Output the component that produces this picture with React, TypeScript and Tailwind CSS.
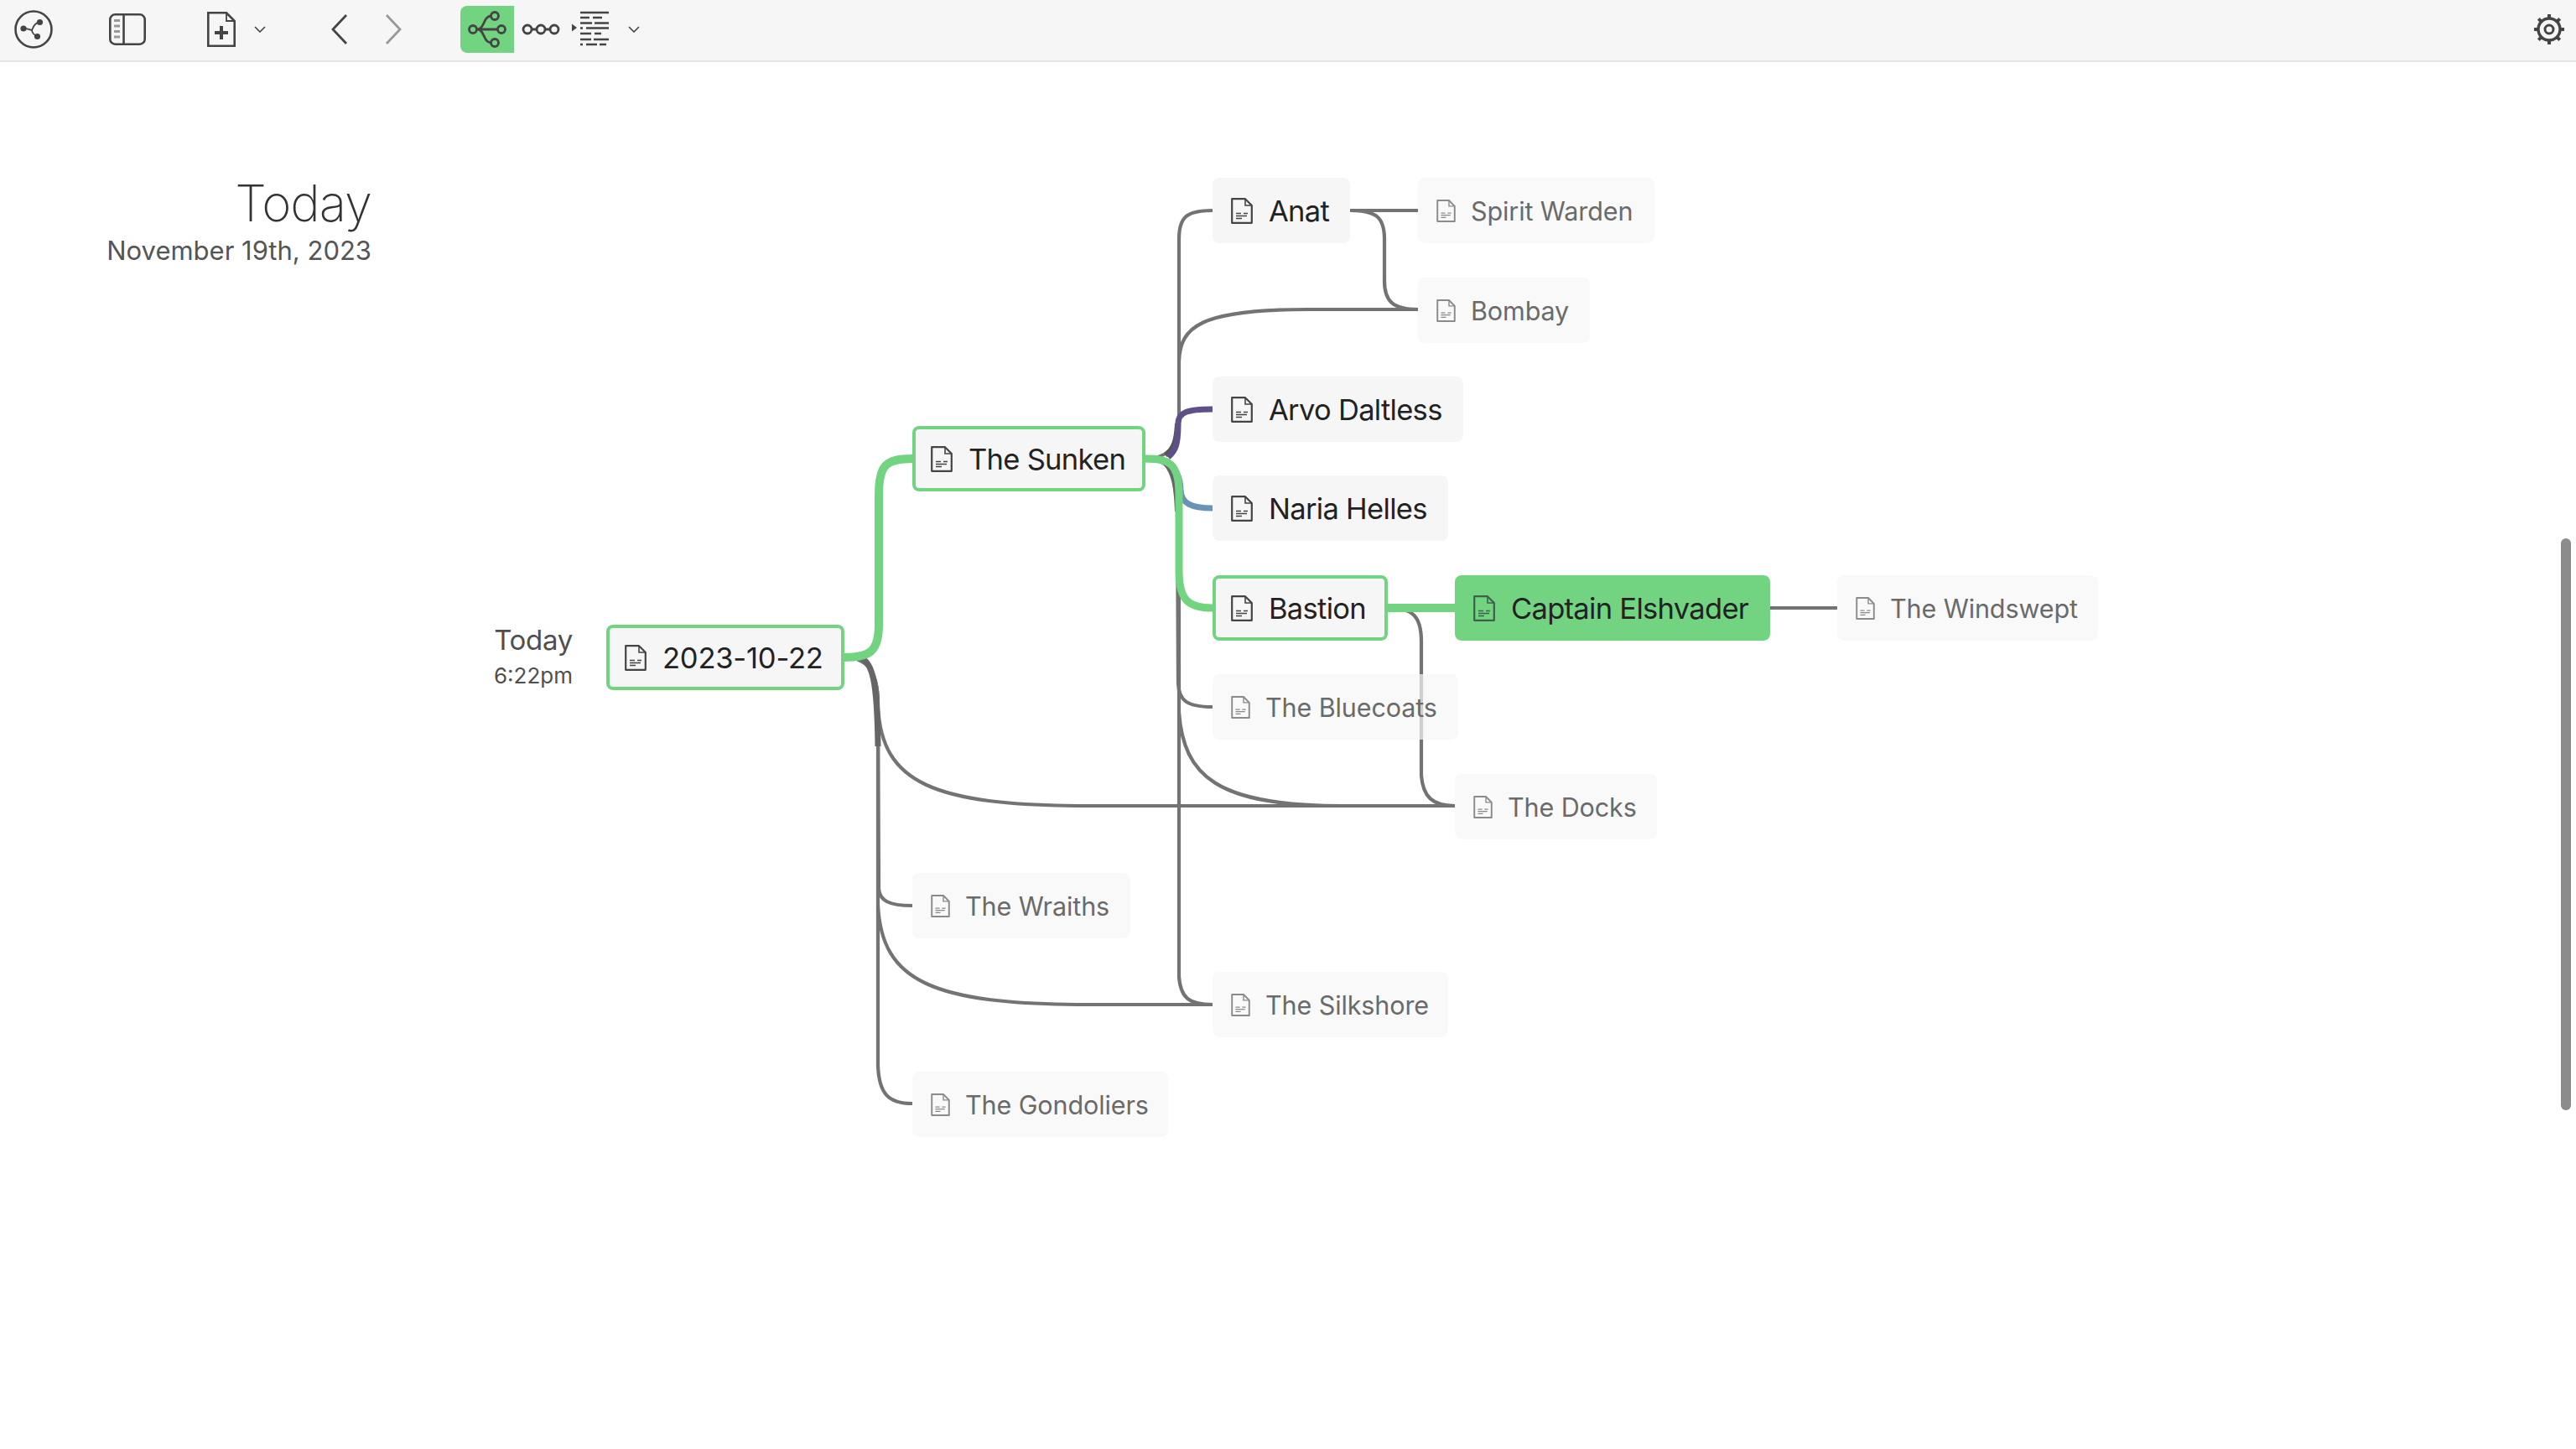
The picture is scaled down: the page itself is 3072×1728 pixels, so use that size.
const font = "font-['Inter','Liberation_Sans',sans-serif]";

function DocIcon({ dim, green }: { dim?: boolean; green?: boolean }) {
  const stroke = dim ? "#8a8a8a" : green ? "#3f5f48" : "#444444";
  return (
    <svg viewBox="0 0 26 31" className={dim ? "w-[23px] h-[27px] shrink-0" : "w-[26px] h-[31px] shrink-0"} fill="none" stroke={stroke}>
      <path d="M1.2 1.2H17L24.8 9V29.8H1.2Z" strokeWidth="2.2" strokeLinejoin="round" />
      <path d="M17 1.2V9H24.8" strokeWidth="1.6" />
      <path d="M6 18.5H12M15 18.5H20M6 21.5H19M6 24.5H13" strokeWidth="1.4" />
    </svg>
  );
}

type NodeProps = {
  label: string;
  pos: string;
  kind?: "normal" | "dim" | "active" | "current";
  track?: string;
};

function Node({ label, pos, kind = "normal", track = "tracking-[-0.7px]" }: NodeProps) {
  const base = "absolute h-[78px] flex items-center rounded-[8px] whitespace-nowrap";
  if (kind === "dim") {
    return (
      <div className={`${base} ${pos} bg-[#f7f7f7]/70 pl-[22px] gap-[18px] text-[30.5px] tracking-[-0.1px] text-[#6a6a6a]`}>
        <DocIcon dim />
        <span className="pt-[2px]">{label}</span>
      </div>
    );
  }
  const look =
    kind === "active"
      ? "bg-[#f6f6f6] border-[4px] border-[#72d481] pl-[18px]"
      : kind === "current"
        ? "bg-[#72d481] pl-[22px]"
        : "bg-[#f6f6f6] pl-[22px]";
  return (
    <div className={`${base} ${pos} ${look} ${track} gap-[19px] text-[34.5px] text-[#222222]`}>
      <DocIcon green={kind === "current"} />
      <span className="pt-[1px]">{label}</span>
    </div>
  );
}

const grayEdges = [
  // from the root
  "M1007 784C1030 784 1047 795 1047 840L1048 1060C1049 1074 1060 1080 1088 1080",
  "M1007 784C1030 784 1047 795 1047 840L1047 1270C1048 1305 1060 1316 1088 1316",
  "M1047 843C1052 933 1110 961 1300 961L1735 961",
  "M1047 1080C1052 1170 1110 1198 1300 1198L1446 1198",
  // from The Sunken
  "M1366 547C1390 547 1406 535 1406 500L1406 285C1406 258 1416 251 1446 251",
  "M1366 547C1390 547 1406 560 1406 600L1406 1165C1408 1190 1418 1198 1446 1198",
  "M1366 547C1390 547 1404 560 1404 600L1405 815C1406 836 1416 843 1446 843",
  "M1406 430C1408 390 1430 369 1560 369L1691 369",
  "M1406 850C1412 925 1450 961 1600 961L1735 961",
  // further out
  "M1610 251C1640 251 1651 258 1651 285L1651 335C1651 360 1662 369 1691 369",
  "M1610 251L1691 251",
  "M1655 725C1685 725 1695 735 1695 765L1695 925C1697 950 1708 961 1735 961",
  "M2111 725L2191 725",
];

function Edges() {
  return (
    <svg viewBox="0 0 3072 1728" className="absolute inset-0 w-[3072px] h-[1728px]" fill="none">
      {grayEdges.map((d) => (
        <path key={d} d={d} stroke="#737373" strokeWidth="4.2" />
      ))}
      <path d="M1028 785C1040 792 1046 810 1047 890" stroke="#666666" strokeWidth="7" />
      <path d="M1390 552C1400 565 1403 580 1404 610" stroke="#666666" strokeWidth="6" />
      <path d="M1390 543C1400 535 1403 525 1404 505" stroke="#555555" strokeWidth="6" />
      <path d="M1393 545C1402 538 1405 530 1405 505C1405 492 1415 488 1446 488" stroke="#5f5188" strokeWidth="7" />
      <path d="M1390 549C1402 556 1408 570 1408 585C1409 600 1420 606 1446 606" stroke="#6b93b5" strokeWidth="7" />
      <path d="M1007 784C1036 784 1048 778 1048 745L1048 590C1048 555 1056 547 1088 547" stroke="#72d481" strokeWidth="10" />
      <path d="M1366 547C1394 547 1406 552 1406 590L1406 680C1406 715 1416 725 1446 725" stroke="#72d481" strokeWidth="9" />
      <path d="M1655 725L1735 725" stroke="#72d481" strokeWidth="10" />
    </svg>
  );
}

function ToolbarIcons() {
  return (
    <>
      <svg viewBox="0 0 46 46" className="ml-[17px] w-[46px] h-[46px] shrink-0" fill="none" stroke="#444444">
        <circle cx="23" cy="23" r="21.5" strokeWidth="2.6" />
        <circle cx="11" cy="22" r="3.6" fill="#444444" stroke="none" />
        <circle cx="30.5" cy="14.5" r="3.6" fill="#444444" stroke="none" />
        <circle cx="27.5" cy="31.5" r="3.6" fill="#444444" stroke="none" />
        <path d="M11 22C18 22 19 24 21 24C22 24 22 16 30 14.5M21 24C21 27 24 30 27 31" strokeWidth="1.8" />
      </svg>
      <svg viewBox="0 0 44 38" className="ml-[67px] w-[44px] h-[38px] shrink-0" fill="none" stroke="#444444">
        <rect x="1.3" y="1.3" width="41.4" height="35.4" rx="6" strokeWidth="2.6" />
        <path d="M17.5 1V37" strokeWidth="2.6" />
        <path d="M6 8.5H13M6 15H13M6 21.5H13M6 28H13" stroke="#999999" strokeWidth="3" />
      </svg>
      <svg viewBox="0 0 34 42" className="ml-[73px] w-[34px] h-[42px] shrink-0" fill="none" stroke="#444444">
        <path d="M1.3 1.3H23L32.7 11V40.7H1.3Z" strokeWidth="2.6" />
        <path d="M23 1.3V11H32.7" strokeWidth="1.8" />
        <path d="M17 17V33M9 25H25" strokeWidth="4" />
      </svg>
      <svg viewBox="0 0 14 8" className="ml-[22px] w-[14px] h-[8px] shrink-0" fill="none" stroke="#444444" strokeWidth="1.6">
        <path d="M1 1L7 7L13 1" />
      </svg>
      <svg viewBox="0 0 20 36" className="ml-[78px] w-[20px] h-[36px] shrink-0" fill="none" stroke="#444444" strokeWidth="2.8">
        <path d="M18 1L2 18L18 35" />
      </svg>
      <svg viewBox="0 0 20 36" className="ml-[44px] w-[20px] h-[36px] shrink-0" fill="none" stroke="#999999" strokeWidth="2.8">
        <path d="M2 1L18 18L2 35" />
      </svg>
      <div className="ml-[70px] w-[64px] h-[56px] shrink-0 bg-[#72d481] rounded-l-[8px] flex items-center justify-center">
        <svg viewBox="0 0 46 46" className="w-[46px] h-[46px]" fill="none" stroke="#444444" strokeWidth="2.8">
          <circle cx="6" cy="23" r="4.5" />
          <circle cx="32" cy="7" r="4.5" />
          <circle cx="40" cy="23" r="4.5" />
          <circle cx="32" cy="39" r="4.5" />
          <path d="M10.5 23H35.5M12 23C20 22 18 8 27.5 7M12 23C20 24 18 38 27.5 39" />
        </svg>
      </div>
      <svg viewBox="0 0 46 14" className="ml-[9px] w-[46px] h-[14px] shrink-0" fill="none" stroke="#444444" strokeWidth="2.8">
        <circle cx="7" cy="7" r="5" />
        <circle cx="23" cy="7" r="5" />
        <circle cx="39" cy="7" r="5" />
        <path d="M12 7H18M28 7H34" />
      </svg>
      <svg viewBox="0 0 44 44" className="ml-[14px] w-[44px] h-[44px] shrink-0" fill="none" stroke="#444444" strokeWidth="2.4">
        <path d="M0 15.5L6 20L0 24.5Z" fill="#444444" stroke="none" />
        <path d="M10 2H44M10 8H21M25 8H36M10 14.5H24M27 14.5H44M10 20.5H13M17 20.5H44M10 27H23M27 27H35M10 34H23M26 34H44M10 40H13M17 40H30M33 40H41" />
      </svg>
      <svg viewBox="0 0 14 8" className="ml-[23px] w-[14px] h-[8px] shrink-0" fill="none" stroke="#444444" strokeWidth="1.6">
        <path d="M1 1L7 7L13 1" />
      </svg>
      <svg viewBox="0 0 40 40" className="ml-auto mr-[12px] w-[40px] h-[40px] shrink-0" fill="none" stroke="#444444">
        <circle cx="20" cy="20" r="13" strokeWidth="3.4" />
        <circle cx="20" cy="20" r="5" strokeWidth="3" />
        <path d="M20 2V7M20 33V38M2 20H7M33 20H38M7.3 7.3L10.8 10.8M29.2 29.2L32.7 32.7M7.3 32.7L10.8 29.2M29.2 10.8L32.7 7.3" strokeWidth="4" />
      </svg>
    </>
  );
}

export default function App() {
  return (
    <div className={`w-[3072px] h-[1728px] relative overflow-hidden bg-white ${font}`}>
      <header className="h-[74px] bg-[#f6f6f6] border-b-2 border-[#e4e4e4] flex items-center pb-[2px]">
        <ToolbarIcons />
      </header>

      <div className="absolute left-[100px] top-[205px] w-[343px] text-right">
        <div className="text-[60px] leading-[74px] font-extralight tracking-[-1px] text-[#333333]">Today</div>
        <div className="text-[31px] leading-[40px] text-[#555555]">November 19th, 2023</div>
      </div>
      <div className="absolute left-[560px] top-[740px] w-[123px] text-right text-[#4f4f4f]">
        <div className="text-[33px] leading-[46px] tracking-[-0.3px]">Today</div>
        <div className="text-[26px] leading-[40px]">6:22pm</div>
      </div>

      <Edges />

      <Node label="2023-10-22" kind="active" track="tracking-[-0.2px]" pos="left-[723px] top-[745px] w-[284px]" />
      <Node label="The Sunken" kind="active" pos="left-[1088px] top-[508px] w-[278px]" />
      <Node label="Anat" pos="left-[1446px] top-[212px] w-[164px]" />
      <Node label="Arvo Daltless" pos="left-[1446px] top-[449px] w-[299px]" />
      <Node label="Naria Helles" pos="left-[1446px] top-[567px] w-[281px]" />
      <Node label="Bastion" kind="active" pos="left-[1446px] top-[686px] w-[209px]" />
      <Node label="Captain Elshvader" kind="current" pos="left-[1735px] top-[686px] w-[376px]" />
      <Node label="Spirit Warden" kind="dim" pos="left-[1691px] top-[212px] w-[282px]" />
      <Node label="Bombay" kind="dim" pos="left-[1691px] top-[331px] w-[205px]" />
      <Node label="The Windswept" kind="dim" pos="left-[2191px] top-[686px] w-[311px]" />
      <Node label="The Bluecoats" kind="dim" pos="left-[1446px] top-[804px] w-[293px]" />
      <Node label="The Docks" kind="dim" pos="left-[1735px] top-[923px] w-[241px]" />
      <Node label="The Wraiths" kind="dim" pos="left-[1088px] top-[1041px] w-[260px]" />
      <Node label="The Silkshore" kind="dim" pos="left-[1446px] top-[1159px] w-[281px]" />
      <Node label="The Gondoliers" kind="dim" pos="left-[1088px] top-[1278px] w-[305px]" />

      <div className="absolute left-[3054px] top-[642px] w-[12px] h-[682px] rounded-full bg-[#8c8c8c]" />
    </div>
  );
}
